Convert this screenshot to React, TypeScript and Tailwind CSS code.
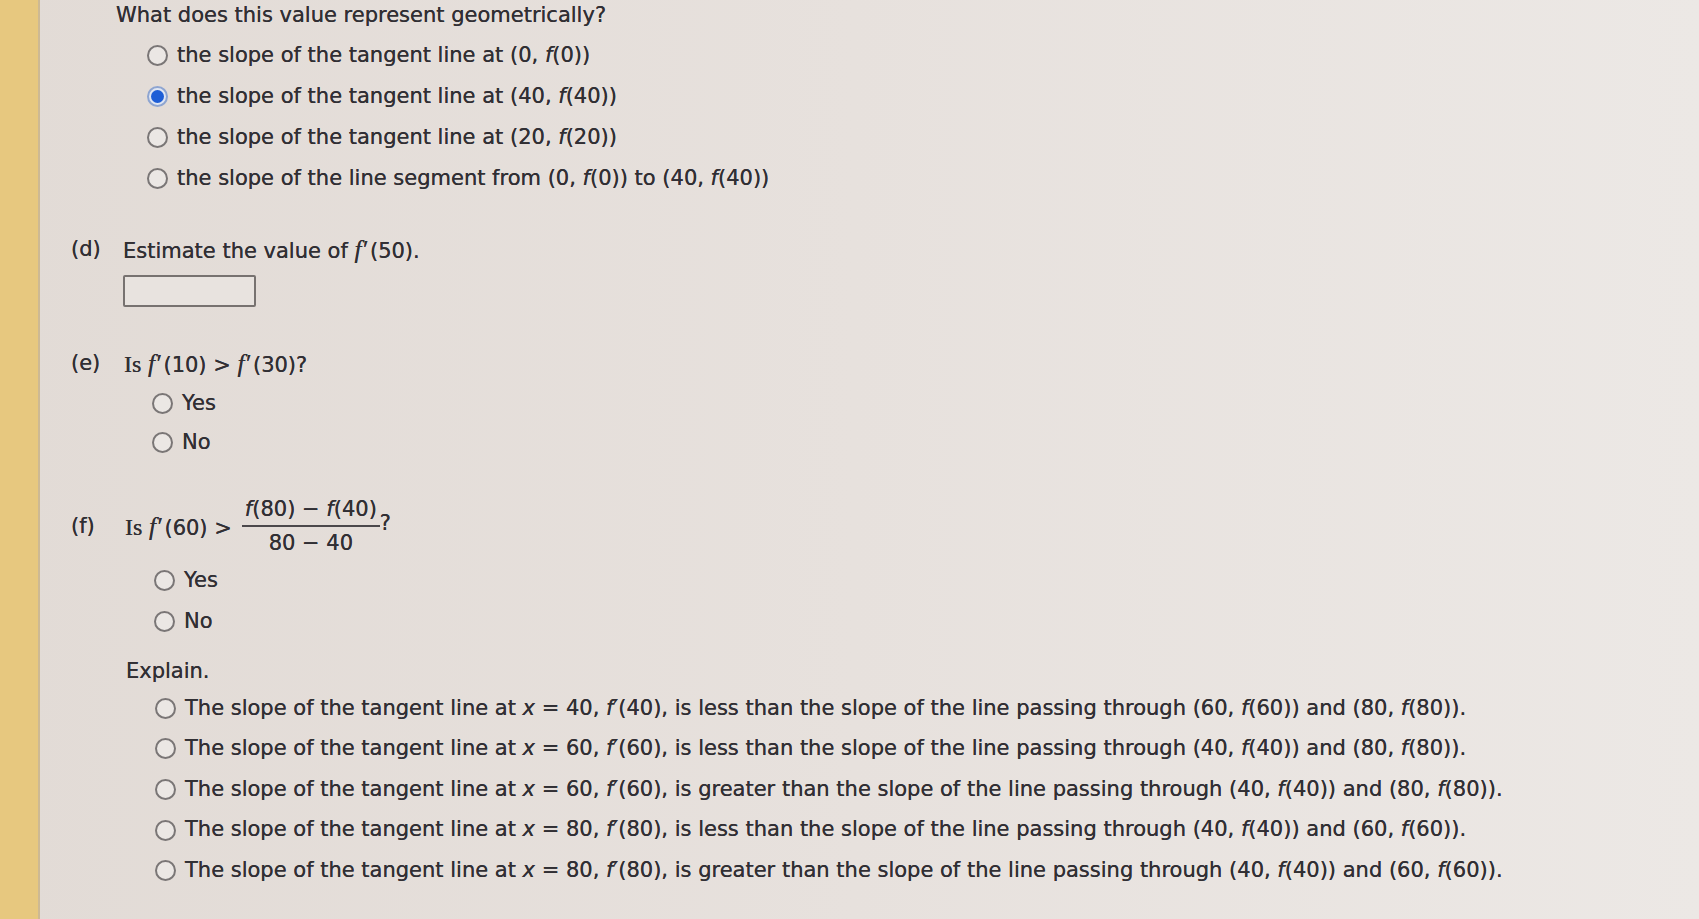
import React from "react";

const F = () => <i className="italic">f</i>;
const Fp = () => <i className="mr-[3px] font-['Liberation_Serif',serif] italic text-[25px]">f′</i>;

const Radio = ({ checked = false }: { checked?: boolean }) => (
  <span
    className={
      checked
        ? "inline-flex h-[21px] w-[21px] shrink-0 items-center justify-center rounded-full border-[2.5px] border-[#8ea5d1] bg-[#dfe6f3]"
        : "inline-flex h-[21px] w-[21px] shrink-0 items-center justify-center rounded-full border-[2.5px] border-[#7a7676] bg-[#ebe7e4]"
    }
  >
    {checked && <span className="h-[13px] w-[13px] rounded-full bg-[#1e5ed6]" />}
  </span>
);

const Option = ({ children, checked, h = "h-[41px]" }: { children: React.ReactNode; checked?: boolean; h?: string }) => (
  <div className={`flex ${h} items-center gap-[9px] whitespace-nowrap`}>
    <Radio checked={checked} />
    <span>{children}</span>
  </div>
);

const explain: [string, string, string][] = [
  ["40", "less", "(60, |60)) and (80, |80))"],
  ["60", "less", "(40, |40)) and (80, |80))"],
  ["60", "greater", "(40, |40)) and (80, |80))"],
  ["80", "less", "(40, |40)) and (60, |60))"],
  ["80", "greater", "(40, |40)) and (60, |60))"],
];

// "|" marks where an italic f( goes
const withF = (s: string) =>
  s.split("|").map((part, i) => (
    <React.Fragment key={i}>
      {i > 0 && (
        <>
          <F />(
        </>
      )}
      {part}
    </React.Fragment>
  ));

export default function App() {
  return (
    <div className="flex h-[919px] w-full overflow-hidden bg-linear-to-r from-[#e2dbd6] via-[#e7e1dd] to-[#ece8e5] font-['DejaVu_Sans',sans-serif] text-[21px] text-[#312f34] [text-shadow:0_0_0.5px_#312f34]">
      <div className="w-[40px] shrink-0 border-r-2 border-r-[#cdb993] bg-[#e7c87f]" />
      <div className="flex flex-col pl-[31px]">
        <div className="ml-[45px] flex h-[32px] items-center">What does this value represent geometrically?</div>
        <div className="ml-[76px] mt-[3px]">
          <Option>
            the slope of the tangent line at (0, <F />(0))
          </Option>
          <Option checked>
            the slope of the tangent line at (40, <F />(40))
          </Option>
          <Option>
            the slope of the tangent line at (20, <F />(20))
          </Option>
          <Option>
            the slope of the line segment from (0, <F />(0)) to (40, <F />(40))
          </Option>
        </div>

        <div className="mt-[35px] flex h-[32px] items-center">
          <span className="w-[52px]">(d)</span>
          <span>
            Estimate the value of <Fp />(50).
          </span>
        </div>
        <div className="ml-[52px] mt-[9px] h-[32px] w-[133px] rounded-[2px] border-2 border-[#777270] bg-[#e8e3df]" />

        <div className="mt-[41px] flex h-[32px] items-center">
          <span className="w-[53px]">(e)</span>
          <span>
            <span className="font-['Liberation_Serif',serif] text-[24px]">Is</span> <Fp />(10) &gt; <Fp />(30)?
          </span>
        </div>
        <div className="ml-[81px] mt-[4px]">
          <Option h="h-[39px]">Yes</Option>
          <Option h="h-[39px]">No</Option>
        </div>

        <div className="mt-[32px] flex items-center">
          <span className="w-[54px]">(f)</span>
          <span>
            <span className="font-['Liberation_Serif',serif] text-[24px]">Is</span> <Fp />(60) &gt;
          </span>
          <span className="ml-[10px] inline-flex flex-col items-center">
            <span className="px-[3px] leading-[31px]">
              <F />(80) − <F />(40)
            </span>
            <span className="h-[2px] w-full bg-[#4b484b]" />
            <span className="leading-[33px]">80 − 40</span>
          </span>
          <span className="-mt-[6px]">?</span>
        </div>
        <div className="ml-[83px]">
          <Option h="h-[41px]">Yes</Option>
          <Option h="h-[41px]">No</Option>
        </div>

        <div className="ml-[55px] mt-[14px] flex h-[32px] items-center">Explain.</div>
        <div className="ml-[84px]">
          {explain.map(([x, cmp, pts], i) => (
            <Option key={i} h="h-[40.6px]">
              The slope of the tangent line at <i className="italic">x</i> = {x}, <F />′({x}), is {cmp} than the slope of
              the line passing through {withF(pts)}.
            </Option>
          ))}
        </div>
      </div>
    </div>
  );
}
